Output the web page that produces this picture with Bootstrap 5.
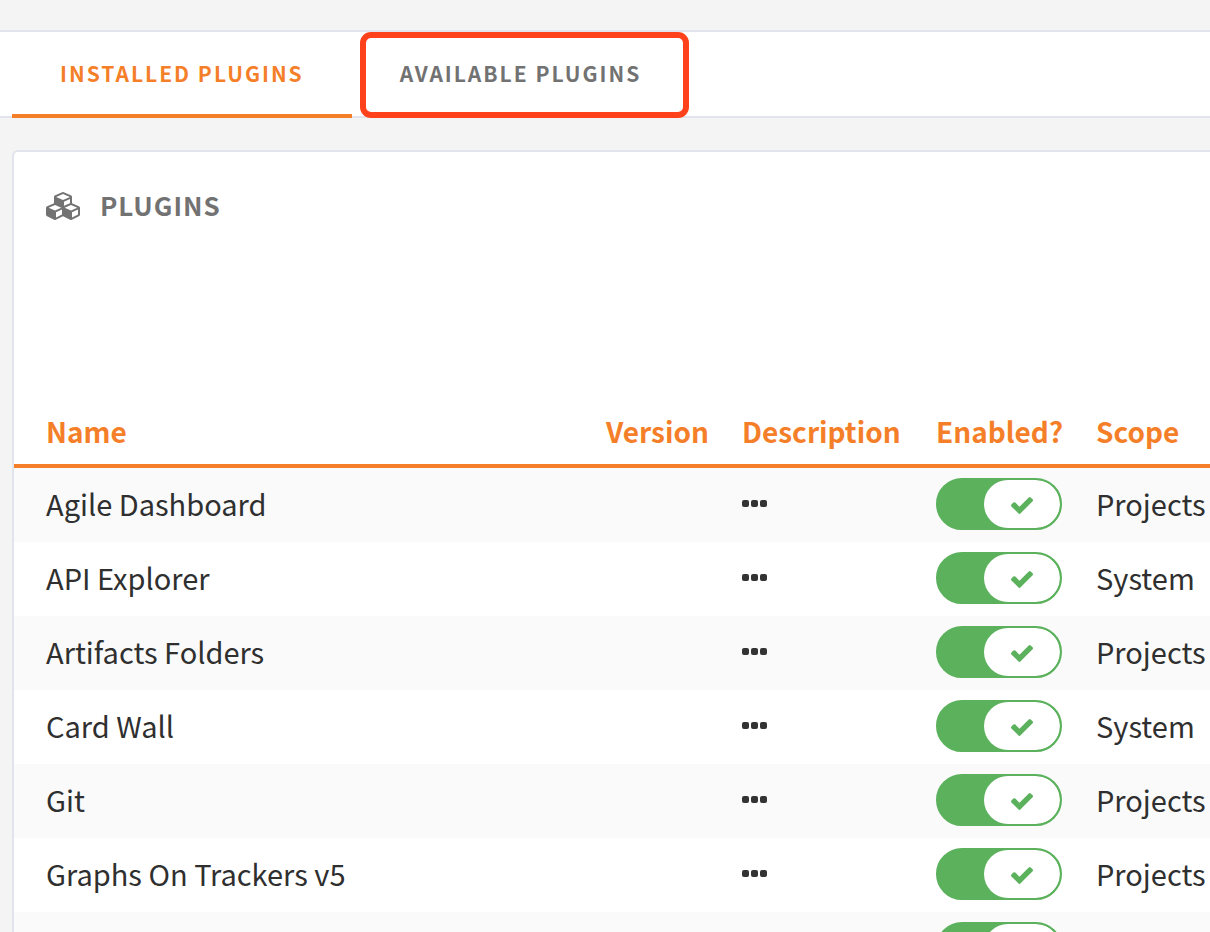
<!DOCTYPE html>
<html lang="en">
<head>
<meta charset="utf-8">
<meta name="viewport" content="width=device-width, initial-scale=1">
<title>Plugins</title>
<link href="https://cdn.jsdelivr.net/npm/bootstrap@5.3.0/dist/css/bootstrap.min.css" rel="stylesheet">
<style>
  :root { --brand: #f57f29; --line: #e1e4ea; --dim: #727272; --ok: #5bb15c; }
  body { background: #f4f4f4; color: #2f2f2f; font-family: "Noto Sans CJK JP", "Source Sans Pro", sans-serif; font-size: 29px; line-height: 40px; }
  .tab-bar { margin-top: 30px; padding-left: 12px; border-top: 2px solid var(--line); background: #fff; box-shadow: inset 0 -2px var(--line); }
  .tab-bar .nav-link { height: 86px; padding: 21px 48px 0; border-bottom: 4px solid transparent; color: var(--dim); font-size: 21px; font-weight: 700; letter-spacing: 2px; text-transform: uppercase; }
  .tab-bar .nav-link.active { border-color: var(--brand); color: var(--brand); }
  .tab-callout::after { content: ""; position: absolute; inset: 0 0 -4px 8px; border: 6px solid #ff411c; border-radius: 11px; pointer-events: none; }
  .pane { margin: 32px 0 0 12px; border: 2px solid var(--line); border-right: 0; border-radius: 6px 0 0 0; background: #fff; }
  .pane-title { gap: 20px; padding: 34px 32px 0; color: var(--dim); }
  .pane-title h1 { padding-bottom: 2px; font-size: 26px; line-height: 38px; font-weight: 700; letter-spacing: 1px; text-transform: uppercase; }
  .plugin-table { table-layout: fixed; border-collapse: separate; border-spacing: 0; margin-top: 184px; color: inherit; --bs-table-bg: transparent; --bs-table-color: #2f2f2f; --bs-table-striped-bg: #fafafa; --bs-table-striped-color: #2f2f2f; }
  .plugin-table > thead th { padding: 0 0 12px 16px; border-bottom: 4px solid var(--brand); color: var(--brand); font-size: 28px; font-weight: 700; line-height: 42px; white-space: nowrap; }
  .plugin-table > tbody td { height: 74px; padding: 0 0 4px 16px; border: 0; vertical-align: middle; white-space: nowrap; }
  .plugin-table > tbody .ctl { padding-bottom: 2px; }
  .plugin-table tr > :first-child { padding-left: 32px; }
  .c-version { width: 136px; } .c-desc { width: 194px; } .c-enabled { width: 160px; } .c-scope { width: 130px; }
  .plugin-table .form-check-input { display: block; width: 126px; height: 52px; margin: 0; border: 2px solid var(--ok); border-radius: 26px; background-size: 126px 52px; background-position: center; background-origin: border-box; }
  .plugin-table .form-check-input:checked { background-color: var(--ok); border-color: var(--ok); background-image: url("data:image/svg+xml,%3Csvg xmlns='http://www.w3.org/2000/svg' viewBox='0 0 126 52'%3E%3Crect x='48' y='2' width='76' height='48' rx='24' fill='%23fff'/%3E%3Cpath transform='translate(73.300 14.300) scale(.0142)' fill='%235bb15c' d='M1671 566q0 40-28 68l-724 724-136 136q-28 28-68 28t-68-28l-136-136-362-362q-28-28-28-68t28-68l136-136q28-28 68-28t68 28l294 295 656-657q28-28 68-28t68 28l136 136q28 28 28 68z'/%3E%3C/svg%3E"); }
  .more { display: block; color: #333; }
</style>
</head>
<body class="vh-100 overflow-hidden">
<svg class="d-none" aria-hidden="true"><symbol id="dots" viewBox="0 0 25 7"><g fill="currentColor"><rect width="7" height="7" rx="2"/><rect x="9" width="7" height="7" rx="2"/><rect x="18" width="7" height="7" rx="2"/></g></symbol></svg>
<nav class="tab-bar nav flex-nowrap text-nowrap">
  <a class="nav-link active" aria-current="page" href="#">Installed plugins</a>
  <a class="nav-link tab-callout position-relative" href="#">Available plugins</a>
</nav>
<main class="pane">
  <header class="pane-title d-flex align-items-center">
    <svg width="34" height="28" viewBox="0 0 2176 1792" fill="currentColor" aria-hidden="true"><path d="M640 1632l384-192v-314l-384 164v342zm-64-454l404-173-404-173-404 173zm1088 454l384-192v-314l-384 164v342zm-64-454l404-173-404-173-404 173zm-448-293l384-165v-266l-384 164v267zm-64-379l441-189-441-189-441 189zm1088 518v416q0 36-19 67t-52 47l-448 224q-25 14-57 14t-57-14l-448-224q-4-2-7-4-2 2-7 4l-448 224q-25 14-57 14t-57-14l-448-224q-33-16-52-47t-19-67v-416q0-38 21.500-70t56.500-48l434-186v-400q0-38 21.500-70t56.500-48l448-192q23-10 50-10t50 10l448 192q35 16 56.500 48t21.500 70v400l434 186q36 16 57 48t21 70z"/></svg>
    <h1 class="mb-0">Plugins</h1>
  </header>
  <table class="table table-striped plugin-table mb-0">
    <thead><tr><th scope="col">Name</th><th scope="col" class="c-version">Version</th><th scope="col" class="c-desc">Description</th><th scope="col" class="c-enabled">Enabled?</th><th scope="col" class="c-scope">Scope</th></tr></thead>
    <tbody>
      <tr><td><label for="p1">Agile Dashboard</label></td><td></td><td><svg class="more" width="25" height="7"><use href="#dots"/></svg></td><td class="ctl"><input class="form-check-input" type="checkbox" id="p1" checked></td><td>Projects</td></tr>
      <tr><td><label for="p2">API Explorer</label></td><td></td><td><svg class="more" width="25" height="7"><use href="#dots"/></svg></td><td class="ctl"><input class="form-check-input" type="checkbox" id="p2" checked></td><td>System</td></tr>
      <tr><td><label for="p3">Artifacts Folders</label></td><td></td><td><svg class="more" width="25" height="7"><use href="#dots"/></svg></td><td class="ctl"><input class="form-check-input" type="checkbox" id="p3" checked></td><td>Projects</td></tr>
      <tr><td><label for="p4">Card Wall</label></td><td></td><td><svg class="more" width="25" height="7"><use href="#dots"/></svg></td><td class="ctl"><input class="form-check-input" type="checkbox" id="p4" checked></td><td>System</td></tr>
      <tr><td><label for="p5">Git</label></td><td></td><td><svg class="more" width="25" height="7"><use href="#dots"/></svg></td><td class="ctl"><input class="form-check-input" type="checkbox" id="p5" checked></td><td>Projects</td></tr>
      <tr><td><label for="p6">Graphs On Trackers v5</label></td><td></td><td><svg class="more" width="25" height="7"><use href="#dots"/></svg></td><td class="ctl"><input class="form-check-input" type="checkbox" id="p6" checked></td><td>Projects</td></tr>
      <tr><td></td><td></td><td></td><td class="ctl"><input class="form-check-input" type="checkbox" aria-label="Enabled" checked></td><td></td></tr>
    </tbody>
  </table>
</main>
<script src="https://cdn.jsdelivr.net/npm/bootstrap@5.3.0/dist/js/bootstrap.bundle.min.js"></script>
</body>
</html>
